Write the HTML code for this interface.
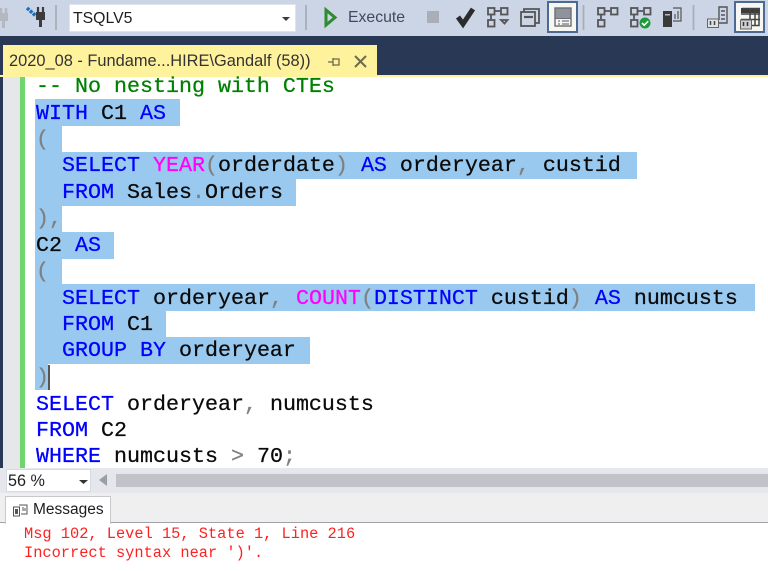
<!DOCTYPE html>
<html><head><meta charset="utf-8"><style>
html,body{margin:0;padding:0;background:#fff}
#p{position:relative;width:768px;height:571px;overflow:hidden;background:#fff;font-family:"Liberation Sans",sans-serif;filter:blur(.35px)}
.a{position:absolute}
.s{position:absolute;left:35px;background:#99c9ef;height:27px}
.l{position:absolute;font:21.67px/26px "Liberation Mono",monospace;white-space:pre;color:#0a0a0a;height:26px;-webkit-text-stroke:.25px currentColor}
.k{color:#0000ff}.f{color:#ff00ff}.g{color:#808080}.c{color:#008000}
svg{position:absolute;left:0;top:0}
</style></head><body><div id="p">
<!-- toolbar -->
<div class="a" style="left:0;top:0;width:768px;height:36px;background:#ccd5e6"></div>
<div class="a" style="left:0;top:36px;width:768px;height:39px;background:#293955"></div>
<div class="a" style="left:69px;top:4px;width:227px;height:28px;background:#fff;border:1px solid #dfe3ea;box-sizing:border-box"></div>
<div class="a" style="left:73px;top:8px;font-size:15.8px;line-height:21px;color:#1e1e1e">TSQLV5</div>
<div class="a" style="left:348px;top:8px;font-size:15.8px;line-height:20px;color:#3f4a5c">Execute</div>
<div class="a" style="left:547px;top:1px;width:31px;height:32px;box-sizing:border-box;border:2px solid #4d6a94;background:#f6f6f2"></div>
<div class="a" style="left:734px;top:1px;width:31px;height:32px;box-sizing:border-box;border:2px solid #4d6a94;background:#f6f6f2"></div>
<svg width="768" height="36" viewBox="0 0 768 36" fill="none">
<path d="M1 8v5M6 8v5" stroke="#b4b8c0" stroke-width="2.5"/><rect x="0" y="13" width="8" height="8" fill="#b4b8c0"/><path d="M3.500 21v7" stroke="#b4b8c0" stroke-width="3"/>
<path d="M27 8l9 8" stroke="#1b6fc2" stroke-width="3.500" stroke-dasharray="3 1"/>
<path d="M38 7v5M43 7v5" stroke="#3c3c3c" stroke-width="2.200"/><rect x="36" y="12" width="9" height="8" fill="#3c3c3c"/><path d="M40.500 20v7" stroke="#3c3c3c" stroke-width="3"/>
<path d="M56 5v25M306 5v25M583.500 5v25M693.500 5v25" stroke="#a8aeb8" stroke-width="1.800"/>
<path d="M282 17h8l-4 4z" fill="#3a3a3a"/>
<path d="M326 10v15l9-7.500z" stroke="#2e8b2e" stroke-width="3" fill="#ccd5e6"/>
<rect x="427" y="11" width="12" height="12" fill="#a9aeb8"/>
<path d="M458 17l5 7 10-15" stroke="#2b2b2b" stroke-width="5"/>
<g stroke="#555" stroke-width="1.800">
<rect x="488" y="8" width="6.500" height="6.500"/><rect x="501" y="8" width="6.500" height="6.500"/><rect x="488" y="20" width="6.500" height="6.500"/>
<path d="M495 11h5M491 15v4M501 20h6.500l-3 3.500z"/>
<rect x="521" y="12" width="14" height="14"/><path d="M524 12V9h15v14h-4" /><path d="M524 17h9" stroke-width="2.200"/>
<rect x="598" y="8" width="6.500" height="6.500"/><rect x="611" y="8" width="6.500" height="6.500"/><rect x="598" y="20" width="6.500" height="6.500"/>
<path d="M605 11h5M601 15v4"/>
<rect x="631" y="8" width="6.500" height="6.500"/><rect x="644" y="8" width="6.500" height="6.500"/><rect x="631" y="20" width="6.500" height="6.500"/>
<path d="M638 11h5M634 15v4"/>
<path d="M673 8h8v13h-8" stroke-width="1.200"/><path d="M675 19v-5M678 19v-8" stroke-width="1.200"/>
<path d="M719 20V7h8v16h-8M721 11h4M721 15h4M721 19h4" stroke-width="1.400"/>
</g>
<circle cx="645" cy="23" r="5.500" fill="#1e9a3c"/><path d="M642 23l2.200 2.200 4-4" stroke="#fff" stroke-width="1.600"/>
<rect x="663" y="11" width="9" height="16" fill="#3a3a3a"/><rect x="665" y="14" width="5" height="1.500" fill="#bbb"/>
<rect x="555" y="8" width="16" height="10" fill="#8f939b"/>
<rect x="555" y="8" width="16" height="18" stroke="#6b6e75" stroke-width="1.400"/>
<path d="M555 18.500h16" stroke="#6b6e75"/><path d="M558 21h2M562 21h7M558 24h2M562 24h7" stroke="#555"/>
<rect x="707.500" y="19" width="11" height="8.500" fill="#dfe1e4" stroke="#666"/><path d="M710.500 21v4M714.500 21v4" stroke="#444" stroke-width="1.500"/>
<rect x="741" y="8" width="19" height="5" fill="#3c3c3c"/>
<path d="M742 8.500h17v17h-9M741 14h19M741 19.500h19M750 8v17M755 8v17" stroke="#444" stroke-width="1.500"/>
<rect x="740.500" y="20" width="11" height="9" fill="#cfd0d2" stroke="#666"/><path d="M743.500 22v4M747.500 22v4" stroke="#333" stroke-width="1.500"/>
</svg>
<!-- tab -->
<div class="a" style="left:3px;top:45px;width:374px;height:32px;background:#fff29d"></div>
<div class="a" style="left:0;top:75px;width:768px;height:2px;background:#fff29d"></div>
<div class="a" style="left:9px;top:51px;font-size:16.4px;line-height:20px;color:#333;white-space:pre">2020_08 - Fundame...HIRE\Gandalf (58))</div>
<svg style="left:325px;top:52px" width="50" height="20" fill="none"><path d="M3 10h5M8 6v8M8 7h6v6h-6" stroke="#6e6a4c" stroke-width="1.300"/><path d="M30 4l11 11M41 4l-11 11" stroke="#6e6a4c" stroke-width="2"/></svg>
<!-- editor -->
<div class="a" style="left:0;top:77px;width:3px;height:391px;background:#293955"></div>
<div class="a" style="left:3px;top:77px;width:17px;height:391px;background:#e6e7e8"></div>
<div class="a" style="left:20px;top:77px;width:5px;height:391px;background:#6fd56f"></div>
<div class="s" style="top:99px;width:145px"></div>
<div class="s" style="top:126px;width:27px"></div>
<div class="s" style="top:152px;width:602px"></div>
<div class="s" style="top:179px;width:261px"></div>
<div class="s" style="top:205px;width:27px"></div>
<div class="s" style="top:232px;width:79px"></div>
<div class="s" style="top:258px;width:27px"></div>
<div class="s" style="top:284px;width:720px"></div>
<div class="s" style="top:311px;width:131px"></div>
<div class="s" style="top:337px;width:275px"></div>
<div class="s" style="top:364px;width:13px;height:26px"></div>
<div class="a" style="left:48px;top:365px;width:2px;height:25px;background:#555"></div>
<div class="l c" style="left:36px;top:74px">-- No nesting with CTEs</div>
<div class="l" style="left:36px;top:101px"><span class="k">WITH</span> C1 <span class="k">AS</span></div>
<div class="l g" style="left:36px;top:127px">(</div>
<div class="l" style="left:62px;top:153px"><span class="k">SELECT</span> <span class="f">YEAR</span><span class="g">(</span>orderdate<span class="g">)</span> <span class="k">AS</span> orderyear<span class="g">,</span> custid</div>
<div class="l" style="left:62px;top:180px"><span class="k">FROM</span> Sales<span class="g">.</span>Orders</div>
<div class="l g" style="left:36px;top:206px">),</div>
<div class="l" style="left:36px;top:233px">C2 <span class="k">AS</span></div>
<div class="l g" style="left:36px;top:259px">(</div>
<div class="l" style="left:62px;top:286px"><span class="k">SELECT</span> orderyear<span class="g">,</span> <span class="f">COUNT</span><span class="g">(</span><span class="k">DISTINCT</span> custid<span class="g">)</span> <span class="k">AS</span> numcusts</div>
<div class="l" style="left:62px;top:312px"><span class="k">FROM</span> C1</div>
<div class="l" style="left:62px;top:338px"><span class="k">GROUP BY</span> orderyear</div>
<div class="l g" style="left:36px;top:365px">)</div>
<div class="l" style="left:36px;top:392px"><span class="k">SELECT</span> orderyear<span class="g">,</span> numcusts</div>
<div class="l" style="left:36px;top:418px"><span class="k">FROM</span> C2</div>
<div class="l" style="left:36px;top:444px;height:24px;overflow:hidden"><span class="k">WHERE</span> numcusts <span class="g">&gt;</span> 70<span class="g">;</span></div>
<!-- zoom bar -->
<div class="a" style="left:0;top:468px;width:768px;height:25px;background:#e6e7ec"></div>
<div class="a" style="left:6px;top:469px;width:85px;height:23px;background:#fff;border:1px solid #d5dbe6;box-sizing:border-box"></div>
<div class="a" style="left:8px;top:472px;font-size:16.2px;line-height:18px;color:#1e1e1e">56 %</div>
<svg style="left:0;top:468px" width="120" height="25"><path d="M79 12h9l-4.500 4z" fill="#333"/><path d="M107 6v12l-8-6z" fill="#9a9ea6"/></svg>
<div class="a" style="left:116px;top:474px;width:652px;height:13px;background:#c2c3c9"></div>
<!-- messages -->
<div class="a" style="left:0;top:493px;width:768px;height:30px;background:#efefef"></div>
<div class="a" style="left:0;top:522px;width:768px;height:1px;background:#a0a0a8"></div>
<div class="a" style="left:5px;top:496px;width:106px;height:28px;background:#fff;border:1px solid #c8c8cc;border-bottom:0;box-sizing:border-box"></div>
<svg style="left:12px;top:502px" width="16" height="16" fill="none"><rect x="1.500" y="5" width="6" height="9" stroke="#555"/><rect x="3" y="7" width="3" height="5" fill="#555"/><path d="M7 3h8v9h-6M11 9V5M13 9V6" stroke="#555"/></svg>
<div class="a" style="left:33px;top:500px;font-size:15.500px;line-height:19px;color:#1e1e1e">Messages</div>
<div class="a" style="left:24px;top:525px;font:15.330px/19px 'Liberation Mono',monospace;color:#ff2020;white-space:pre">Msg 102, Level 15, State 1, Line 216</div>
<div class="a" style="left:24px;top:544px;font:15.330px/19px 'Liberation Mono',monospace;color:#ff2020;white-space:pre">Incorrect syntax near ')'.</div>
</div></body></html>
